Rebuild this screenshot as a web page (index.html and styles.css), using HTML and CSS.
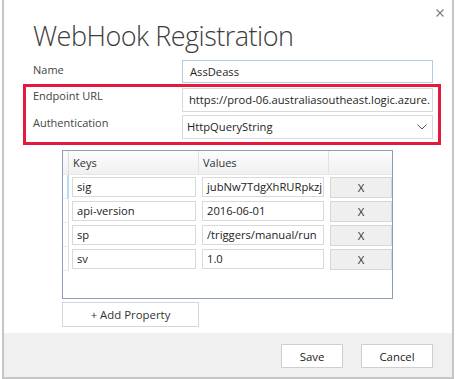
FILE: index.html
```html
<!DOCTYPE html>
<html>
<head>
<meta charset="utf-8">
<link rel="stylesheet" href="styles.css">
</head>
<body>
<div class="dialog">
  <button class="close" aria-label="Close"><svg width="8" height="8" viewBox="0 0 8 8"><path d="M0.5 0.5L7.5 7.5M7.5 0.5L0.5 7.5" stroke="#7a7a7a" stroke-width="1.1" fill="none"/></svg></button>
  <div class="main">
    <h1 class="title">WebHook Registration</h1>
    <div class="field name-field">
      <span class="label name-label">Name</span>
      <div class="input focused">AssDeass</div>
    </div>
    <div class="highlight">
      <div class="field">
        <span class="label">Endpoint URL</span>
        <div class="input">https://prod-06.australiasoutheast.logic.azure.</div>
      </div>
      <div class="field">
        <span class="label">Authentication</span>
        <div class="input select"><span>HttpQueryString</span><svg class="chev" width="10" height="6" viewBox="0 0 10 6"><path d="M0.5 0.5L5 5L9.5 0.5" stroke="#555" stroke-width="1" fill="none"/></svg></div>
      </div>
    </div>
    <div class="grid">
      <div class="gh rh"></div><div class="gh">Keys</div><div class="gh">Values</div><div class="gh last"></div>

      <div class="rh sel"></div>
      <div class="cell"><div class="cin">sig</div></div>
      <div class="cell"><div class="cin">jubNw7TdgXhRURpkzj</div></div>
      <div class="cell xc"><button class="xbtn">X</button></div>

      <div class="rh"></div>
      <div class="cell"><div class="cin">api-version</div></div>
      <div class="cell"><div class="cin">2016-06-01</div></div>
      <div class="cell xc"><button class="xbtn">X</button></div>

      <div class="rh"></div>
      <div class="cell"><div class="cin">sp</div></div>
      <div class="cell"><div class="cin">/triggers/manual/run</div></div>
      <div class="cell xc"><button class="xbtn">X</button></div>

      <div class="rh"></div>
      <div class="cell"><div class="cin">sv</div></div>
      <div class="cell"><div class="cin">1.0</div></div>
      <div class="cell xc"><button class="xbtn">X</button></div>
    </div>
    <button class="add">+ Add Property</button>
  </div>
  <div class="footer">
    <button class="btn save">Save</button>
    <button class="btn cancel">Cancel</button>
  </div>
</div>
</body>
</html>
```
FILE: styles.css
```css
html, body {
  margin: 0;
  padding: 0;
  background: #fff;
}
body {
  font-family: "Open Sans", "Noto Sans", sans-serif;
  font-size: 11px;
  color: #222;
}
button {
  font-family: inherit;
  font-size: inherit;
  color: inherit;
  margin: 0;
  padding: 0;
}
.dialog {
  position: relative;
  margin-left: 2px;
  width: 452px;
  height: 379px;
  box-sizing: border-box;
  border: 2px solid #c6c6c6;
  border-top: 0;
  display: flex;
  flex-direction: column;
  background: #fff;
}
.close {
  position: absolute;
  top: 9px;
  right: 8px;
  width: 8px;
  height: 8px;
  border: 0;
  background: none;
  display: block;
  line-height: 0;
}
.main {
  flex: 1;
  padding: 0 11px 0 19px;
  display: flex;
  flex-direction: column;
  align-items: flex-start;
}
.title {
  margin: 16px 0 0 10px;
  font-weight: 300;
  font-size: 27px;
  letter-spacing: -0.5px;
  line-height: 40px;
  height: 40px;
  color: #3c3c3c;
  white-space: nowrap;
}
.field {
  display: flex;
  align-items: flex-start;
  align-self: stretch;
}
.name-field {
  margin-top: 4px;
  padding: 0 8px 0 10px;
  margin-bottom: 1px;
}
.label {
  width: 149px;
  flex: none;
  line-height: 16px;
  color: #444;
}
.name-label {
  padding-top: 2px;
}
.input {
  flex: 1;
  min-width: 0;
  height: 24px;
  box-sizing: border-box;
  border: 1px solid #d9d9d9;
  padding: 0 4px 0 6px;
  line-height: 22px;
  white-space: nowrap;
  overflow: hidden;
  color: #1e1e1e;
  font-size: 11.2px;
}
.name-field .input {
  height: 23px;
  line-height: 21px;
  padding-left: 7px;
}
.input.focused {
  border-color: #b3cbe6;
}
.select {
  display: flex;
  align-items: center;
  justify-content: space-between;
  padding-left: 4px;
  padding-right: 5px;
}
.chev {
  flex: none;
}
.highlight {
  align-self: stretch;
  border: 3px solid #e4193d;
  padding: 1px 5px 3px 7px;
  display: flex;
  flex-direction: column;
  gap: 3px;
}
.grid {
  margin: 5px 0 0 39px;
  width: 331px;
  height: 149px;
  box-sizing: border-box;
  border: 1px solid #8c9fb6;
  display: grid;
  grid-template-columns: 6px 130px 130px 63px;
  grid-template-rows: 24px repeat(4, 24px);
  align-content: start;
}
.gh {
  background: linear-gradient(#fdfdfd, #f0f0f0);
  border-right: 1px solid #e2e2e2;
  border-bottom: 1px solid #e6e6e6;
  line-height: 23px;
  padding-left: 4px;
  color: #333;
  box-sizing: border-box;
}
.gh.rh {
  padding: 0;
}
.gh.last {
  border-right: 0;
}
.rh {
  border-right: 1px solid #dcdcdc;
  border-bottom: 1px solid #ececec;
  box-sizing: border-box;
}
.rh.sel {
  border-right: 2px solid #b6dcf5;
}
.cell {
  padding: 2px 3px 2px 3px;
  box-sizing: border-box;
}
.cell:nth-child(4n+3) {
  padding-right: 5px;
}
.cin {
  height: 20px;
  box-sizing: border-box;
  border: 1px solid #d9d9d9;
  padding: 0 2px 0 4px;
  line-height: 18px;
  white-space: nowrap;
  overflow: hidden;
  font-size: 11.2px;
  color: #222;
}
.cell.xc {
  padding: 2px 0 1px 1px;
}
.xbtn {
  display: block;
  width: 100%;
  height: 21px;
  border: 1px solid #d6d6d6;
  background: #efefef;
  color: #333;
  font-size: 11.4px;
}
.add {
  margin: 3px 0 0 39px;
  width: 137px;
  height: 25px;
  border: 1px solid #d6d6d6;
  background: #fff;
  color: #333;
  font-size: 11.4px;
}
.footer {
  height: 44px;
  flex: none;
  box-sizing: border-box;
  background: #f0f0f0;
  display: flex;
  justify-content: flex-end;
  align-items: flex-start;
  padding: 11px 19px 0 0;
  gap: 18px;
}
.btn {
  height: 24px;
  border: 1px solid #cfcfcf;
  background: #fff;
  color: #222;
  font-size: 11.4px;
}
.save {
  width: 62px;
}
.cancel {
  width: 72px;
}
```
